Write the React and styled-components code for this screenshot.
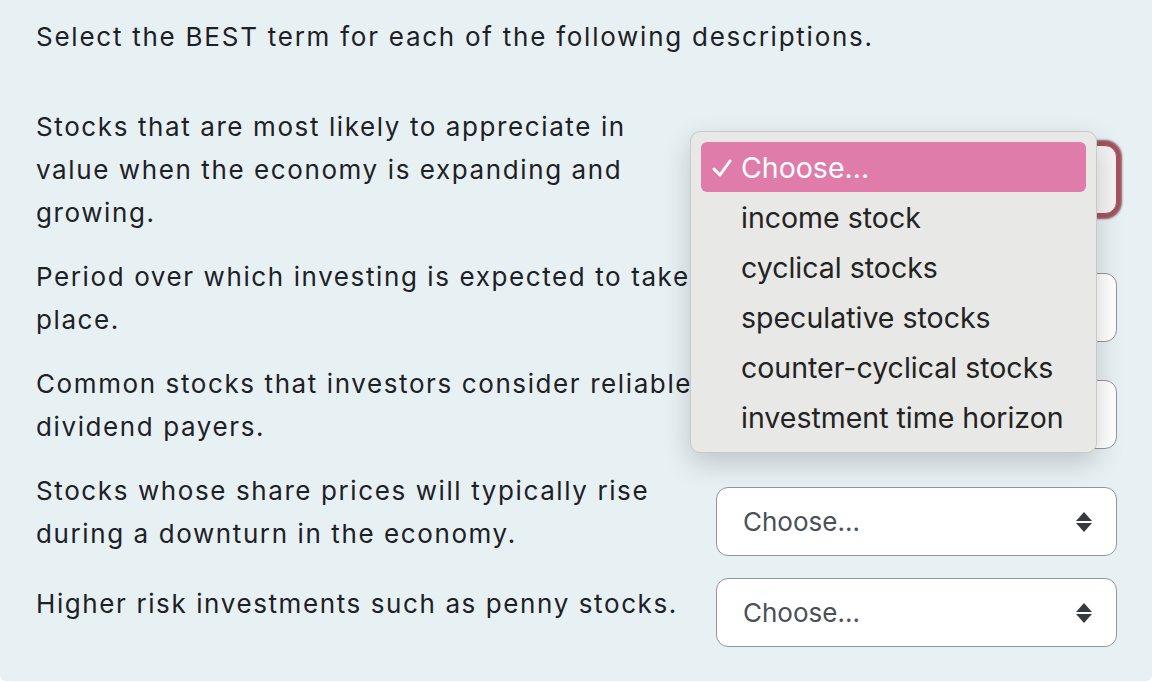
import React from 'react';
import styled, { createGlobalStyle } from 'styled-components';

const GlobalStyle = createGlobalStyle`
    html, body {
        margin: 0;
        padding: 0;
        background: #ffffff;
    }
`;

// each description is split the way the reference wraps it
const rows = [
    ['Stocks that are most likely to appreciate in', 'value when the economy is expanding and', 'growing.'],
    ['Period over which investing is expected to take', 'place.'],
    ['Common stocks that investors consider reliable', 'dividend payers.'],
    ['Stocks whose share prices will typically rise', 'during a downturn in the economy.'],
    ['Higher risk investments such as penny stocks.'],
];

const options = [
    'income stock',
    'cyclical stocks',
    'speculative stocks',
    'counter-cyclical stocks',
    'investment time horizon',
];

function Arrows() {
    return (
        <svg width="16" height="20" viewBox="0 0 16 20">
            <polygon points="0,9 8,0 16,9" fill="#343a40" />
            <polygon points="0,11 16,11 8,20" fill="#343a40" />
        </svg>
    );
}

function CheckMark() {
    return (
        <svg width="22" height="20" viewBox="0 0 22 20">
            <polyline
                points="3,11 9,17 19,3"
                fill="none"
                stroke="#ffffff"
                strokeWidth="3"
                strokeLinecap="round"
                strokeLinejoin="round"
            />
        </svg>
    );
}

export default function App() {
    return (
        <Main>
            <GlobalStyle />
            <Prompt>Select the BEST term for each of the following descriptions.</Prompt>
            <List>
                {rows.map((lines, i) => (
                    <Row key={i}>
                        <Text>
                            {lines.map((l, j) => (
                                <Line key={j}>{l}</Line>
                            ))}
                        </Text>
                        <Control>
                            <Select $focused={i === 0}>
                                <span>Choose...</span>
                                <Arrows />
                            </Select>
                        </Control>
                    </Row>
                ))}
            </List>

            <Menu>
                <MenuItem $active>
                    <Check><CheckMark /></Check>Choose...
                </MenuItem>
                {options.map((o) => (
                    <MenuItem key={o}>{o}</MenuItem>
                ))}
            </Menu>
        </Main>
    );
}

const Main = styled.div`
    position: relative;
    height: 681px;
    box-sizing: border-box;
    background: #e7f0f3;
    border-radius: 0 0 6px 6px;
    padding: 15px 35px 0 36px;
    font-family: Inter, "Liberation Sans", sans-serif;
    color: #1d2125;
    overflow: hidden;
`;

const Prompt = styled.p`
    margin: 0 0 47px 0;
    font-size: 26px;
    line-height: 43px;
    letter-spacing: 1.75px;
    white-space: nowrap;
`;

const List = styled.div`
    display: flex;
    flex-direction: column;
`;

const Row = styled.div`
    display: flex;
    align-items: center;
`;

const Text = styled.div`
    flex: 1;
    min-width: 0;
    font-size: 26px;
    line-height: 43px;
    letter-spacing: 1.6px;
    padding-bottom: 21px;
`;

const Line = styled.div`
    white-space: nowrap;
`;

const Control = styled.div`
    width: 401px;
    flex-shrink: 0;
    padding: 2px 0 4px 0;
`;

const Select = styled.div`
    height: 69px;
    box-sizing: border-box;
    display: flex;
    align-items: center;
    justify-content: space-between;
    padding: 0 24px 0 26px;
    background: ${(p) => (p.$focused ? '#f4f4f4' : '#ffffff')};
    border: 1px solid ${(p) => (p.$focused ? '#c8424c' : '#8f959e')};
    border-radius: 12px;
    box-shadow: ${(p) => (p.$focused ? '0 0 2px 5px rgba(140, 60, 72, 0.85)' : 'none')};
    font-size: 26px;
    color: #495057;
`;

const Menu = styled.div`
    position: absolute;
    left: 690px;
    top: 131px;
    width: 407px;
    box-sizing: border-box;
    padding: 10px 10px 10px 10px;
    background: #e8e8e6;
    border: 1px solid #c9c9c7;
    border-radius: 10px;
    box-shadow: 0 10px 28px rgba(0, 0, 0, 0.18);
    font-family: Inter, "Liberation Sans", sans-serif;
`;

const MenuItem = styled.div`
    height: 50px;
    display: flex;
    align-items: center;
    padding-left: 40px;
    border-radius: 6px;
    font-size: 28.5px;
    color: ${(p) => (p.$active ? '#ffffff' : '#232323')};
    background: ${(p) => (p.$active ? '#e07ca9' : 'transparent')};
    position: relative;
`;

const Check = styled.span`
    position: absolute;
    left: 10px;
    top: 16px;
    display: flex;
`;
